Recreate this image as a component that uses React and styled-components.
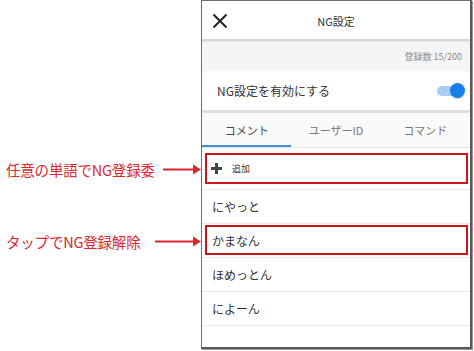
import React from 'react'
import styled, { createGlobalStyle, css } from 'styled-components'

const GlobalStyle = createGlobalStyle`
  html, body {
    margin: 0;
    padding: 0;
    background: #fff;
  }
  body {
    font-family: "Noto Sans CJK JP", Roboto, "Noto Sans", sans-serif;
    color: #333;
  }
`

const Page = styled.div`
  width: 474px;
  height: 351px;
  overflow: hidden;
`

const Phone = styled.div`
  margin-left: 201px;
  width: 268px;
  height: 346px;
  border: 1px solid #6e6e6e;
  border-right: 2px solid #5a5a5a;
  border-bottom: 2px solid #5a5a5a;
  box-shadow: 1px 1px 0 #9a9a9a;
  display: flex;
  flex-direction: column;
  background: #fff;
`

const Header = styled.div`
  height: 38px;
  display: grid;
  grid-template-columns: 40px 1fr 40px;
  align-items: center;
  border-bottom: 1px solid #d6d6d6;
  box-shadow: 0 1px 2px rgba(0, 0, 0, 0.12);
  position: relative;
  z-index: 1;
`

const CloseButton = styled.div`
  display: flex;
  align-items: center;
  padding-left: 10px;
  padding-top: 2px;
`

const Title = styled.div`
  text-align: center;
  font-size: 11px;
  color: #333;
  padding-top: 1px;
`

const CounterBar = styled.div`
  height: 30px;
  background: #f5f5f5;
  display: flex;
  align-items: center;
  justify-content: flex-end;
  padding-right: 8px;
  font-size: 9px;
  color: #8a8a8a;
  border-top: 1px solid #e4e4e4;
`

const SwitchRow = styled.div`
  height: 39px;
  display: flex;
  align-items: center;
  justify-content: space-between;
  padding: 0 7px 0 15px;
  font-size: 12px;
  color: #333;
  border-bottom: 3px solid #dedede;
`

const Track = styled.div`
  position: relative;
  width: 24px;
  height: 10px;
  border-radius: 5px;
  background: #a7cdf4;
  margin-right: 2px;
`

const Knob = styled.div`
  position: absolute;
  top: -3px;
  right: -4px;
  width: 15px;
  height: 15px;
  border-radius: 50%;
  background: #1a7ee8;
  box-shadow: 0 1px 1px rgba(0, 0, 0, 0.2);
`

const Tabs = styled.div`
  height: 34px;
  display: grid;
  grid-template-columns: repeat(3, 1fr);
  background: #fafafa;
  border-bottom: 1px solid #e6e6e6;
`

const Tab = styled.div`
  display: flex;
  align-items: center;
  justify-content: center;
  font-size: 11px;
  color: ${(p) => (p.$active ? '#444' : '#777')};
  border-bottom: 2px solid ${(p) => (p.$active ? '#4a8fd6' : 'transparent')};
  padding-top: 1px;
`

const List = styled.div`
  display: flex;
  flex-direction: column;
`

const Row = styled.div`
  position: relative;
  height: ${(p) => p.$height}px;
  display: flex;
  align-items: center;
  padding-left: ${(p) => (p.$add ? 9 : 10)}px;
  font-size: ${(p) => (p.$add ? 9 : 12)}px;
  color: #333;
  border-bottom: 1px solid #e9e9e9;
  ${(p) =>
    p.$mark &&
    css`
      &::after {
        content: '';
        position: absolute;
        left: 3px;
        right: 2px;
        top: ${p.$mark[0]}px;
        bottom: ${p.$mark[1]}px;
        border: 2px solid #c8161d;
      }
    `}
`

const PlusIcon = styled.span`
  position: relative;
  width: 11px;
  height: 11px;
  margin-right: 10px;
  &::before,
  &::after {
    content: '';
    position: absolute;
    background: #444;
  }
  &::before {
    left: 0;
    right: 0;
    top: 4px;
    height: 3px;
  }
  &::after {
    top: 0;
    bottom: 0;
    left: 4px;
    width: 3px;
  }
`

const Callout = styled.div`
  position: absolute;
  left: -196px;
  right: calc(100% + 2px);
  top: 50%;
  transform: translateY(-50%);
  display: flex;
  align-items: center;
`

const CalloutText = styled.span`
  font-size: 14.5px;
  color: #d8282f;
  white-space: nowrap;
  letter-spacing: -0.2px;
`

const Arrow = styled.span`
  flex: 1;
  position: relative;
  height: 2px;
  background: #d8282f;
  margin-left: ${(p) => p.$gap}px;
  margin-top: ${(p) => p.$drop}px;
  margin-right: 6px;
  &::after {
    content: '';
    position: absolute;
    right: -7px;
    top: -4px;
    border-left: 8px solid #d8282f;
    border-top: 5px solid transparent;
    border-bottom: 5px solid transparent;
  }
`

const CloseIcon = () => (
  <svg width="16" height="16" viewBox="0 0 16 16">
    <path d="M1.5 1.5 L14.5 14.5 M14.5 1.5 L1.5 14.5" stroke="#222" strokeWidth="2" />
  </svg>
)

const words = ['にやっと', 'かまなん', 'ほめっとん', 'によーん']

export default function App() {
  return (
    <Page>
      <GlobalStyle />
      <Phone>
        <Header>
          <CloseButton>
            <CloseIcon />
          </CloseButton>
          <Title>NG設定</Title>
          <span />
        </Header>
        <CounterBar>登録数 15/200</CounterBar>
        <SwitchRow>
          NG設定を有効にする
          <Track>
            <Knob />
          </Track>
        </SwitchRow>
        <Tabs>
          <Tab $active>コメント</Tab>
          <Tab>ユーザーID</Tab>
          <Tab>コマンド</Tab>
        </Tabs>
        <List>
          <Row $add $height={41} $mark={[5, 5]}>
            <PlusIcon />
            追加
            <Callout>
              <CalloutText>任意の単語でNG登録委</CalloutText>
              <Arrow $gap={8} $drop={2} />
            </Callout>
          </Row>
          {words.map((w) => (
            <Row key={w} $height={33} $mark={w === 'かまなん' ? [1, 2] : null}>
              {w}
              {w === 'かまなん' && (
                <Callout>
                  <CalloutText>タップでNG登録解除</CalloutText>
                  <Arrow $gap={15} $drop={1} />
                </Callout>
              )}
            </Row>
          ))}
        </List>
      </Phone>
    </Page>
  )
}
